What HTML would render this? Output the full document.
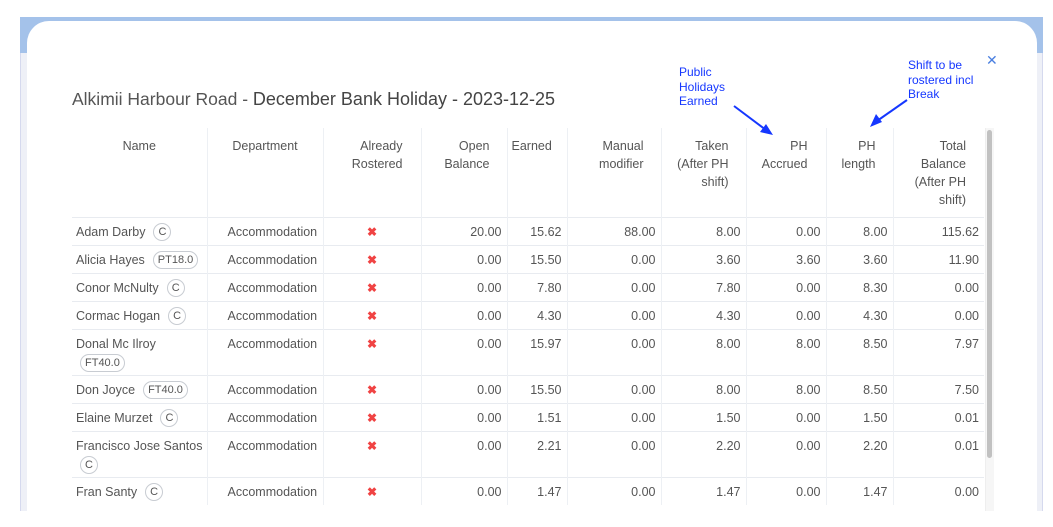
<!DOCTYPE html>
<html><head><meta charset="utf-8"><style>
*{box-sizing:border-box;margin:0;padding:0}
body{width:1053px;height:527px;background:#fff;position:relative;overflow:hidden;font-family:"Liberation Sans",sans-serif;color:#555}
.back{position:absolute;left:20px;top:17px;width:1023px;height:494px;background:#eef0f7;border-right:1px solid #d5d9ee;border-left:1px solid #d5d9ee}
.band{position:absolute;left:20px;top:17px;width:1023px;height:36px;background:#a4c2ea}
.modal{position:absolute;left:27px;top:21px;width:1010px;height:506px;background:#fff;border-radius:22px 22px 0 0}
.title{position:absolute;left:72px;top:89px;font-size:17.5px;color:#555;letter-spacing:0}
.title span{font-size:18px;color:#444}
.close{position:absolute;left:986px;top:52px;font-size:14px;color:#4a7fe0}
.note{position:absolute;font-size:12px;color:#1537ff;line-height:14.5px}
table{position:absolute;left:72px;top:128px;border-collapse:collapse;table-layout:fixed;font-size:12.5px}
td,th{border-left:1px solid #edf0f4;vertical-align:top;font-weight:normal;white-space:nowrap}
td:first-child,th:first-child{border-left:none}
th{height:89px;padding-top:9px;line-height:18px;color:#555}
td{border-top:1px solid #e8ebf0;padding-top:7px;line-height:15px}
tr.r td{height:28px}
tr.t td{height:46px}
.n{text-align:right;padding-right:5px}
.c{text-align:center}
.x{color:#f04343;text-align:center;font-size:12px;font-weight:bold}
.b{display:inline-block;border:1px solid #c8ccd2;border-radius:9px;font-size:11px;line-height:14px;min-width:18px;text-align:center;padding:1px 4px;margin-left:8px;color:#555;position:relative;top:-1px;vertical-align:baseline}
.nm{padding-left:4px;line-height:16px;padding-top:6px}
.sb{position:absolute;left:985px;top:128px;width:9px;height:383px;background:#f6f6f6;border-left:1px solid #eee}
.th{position:absolute;left:987px;top:130px;width:5px;height:328px;background:#c1c1c1;border-radius:3px}
</style></head><body>
<div class="back"></div><div class="band"></div>
<div class="modal"></div>
<div class="title">Alkimii Harbour Road - <span>December Bank Holiday - 2023-12-25</span></div>
<div class="close">✕</div>
<div class="note" style="left:679px;top:65px">Public<br>Holidays<br>Earned</div>
<div class="note" style="left:908px;top:58px">Shift to be<br>rostered incl<br>Break</div>
<svg style="position:absolute;left:0;top:0" width="1053" height="527">
<g stroke="#1537ff" stroke-width="2" fill="#1537ff">
<line x1="734" y1="106" x2="766" y2="130"/><polygon points="773,135 760,132 766,124" stroke="none"/>
<line x1="907" y1="100" x2="877" y2="121"/><polygon points="870,127 876,114 882,122" stroke="none"/>
</g></svg>
<table>
<colgroup><col style="width:135px"><col style="width:116px"><col style="width:98px"><col style="width:86px"><col style="width:60px"><col style="width:94px"><col style="width:85px"><col style="width:80px"><col style="width:67px"><col style="width:91px"></colgroup>
<tr><th class="c">Name</th><th class="c">Department</th><th style="text-align:right;padding-right:18px">Already<br>Rostered</th><th style="text-align:right;padding-right:17px">Open<br>Balance</th><th style="text-align:left;padding-left:4px">Earned</th><th style="text-align:right;padding-right:17px">Manual<br>modifier</th><th style="text-align:right;padding-right:17px">Taken<br>(After PH<br>shift)</th><th style="text-align:right;padding-right:18px">PH<br>Accrued</th><th style="text-align:right;padding-right:17px">PH<br>length</th><th style="text-align:right;padding-right:18px">Total<br>Balance<br>(After PH<br>shift)</th></tr>
<tr class="r"><td class="nm">Adam Darby<span class="b">C</span></td><td style="padding-left:20px">Accommodation</td><td class="x">✖</td><td class="n">20.00</td><td class="n">15.62</td><td class="n">88.00</td><td class="n">8.00</td><td class="n">0.00</td><td class="n">8.00</td><td class="n">115.62</td></tr>
<tr class="r"><td class="nm">Alicia Hayes<span class="b">PT18.0</span></td><td style="padding-left:20px">Accommodation</td><td class="x">✖</td><td class="n">0.00</td><td class="n">15.50</td><td class="n">0.00</td><td class="n">3.60</td><td class="n">3.60</td><td class="n">3.60</td><td class="n">11.90</td></tr>
<tr class="r"><td class="nm">Conor McNulty<span class="b">C</span></td><td style="padding-left:20px">Accommodation</td><td class="x">✖</td><td class="n">0.00</td><td class="n">7.80</td><td class="n">0.00</td><td class="n">7.80</td><td class="n">0.00</td><td class="n">8.30</td><td class="n">0.00</td></tr>
<tr class="r"><td class="nm">Cormac Hogan<span class="b">C</span></td><td style="padding-left:20px">Accommodation</td><td class="x">✖</td><td class="n">0.00</td><td class="n">4.30</td><td class="n">0.00</td><td class="n">4.30</td><td class="n">0.00</td><td class="n">4.30</td><td class="n">0.00</td></tr>
<tr class="t"><td class="nm">Donal Mc Ilroy<br><span class="b" style="margin-left:4px;top:2px">FT40.0</span></td><td style="padding-left:20px">Accommodation</td><td class="x">✖</td><td class="n">0.00</td><td class="n">15.97</td><td class="n">0.00</td><td class="n">8.00</td><td class="n">8.00</td><td class="n">8.50</td><td class="n">7.97</td></tr>
<tr class="r"><td class="nm">Don Joyce<span class="b">FT40.0</span></td><td style="padding-left:20px">Accommodation</td><td class="x">✖</td><td class="n">0.00</td><td class="n">15.50</td><td class="n">0.00</td><td class="n">8.00</td><td class="n">8.00</td><td class="n">8.50</td><td class="n">7.50</td></tr>
<tr class="r"><td class="nm">Elaine Murzet<span class="b">C</span></td><td style="padding-left:20px">Accommodation</td><td class="x">✖</td><td class="n">0.00</td><td class="n">1.51</td><td class="n">0.00</td><td class="n">1.50</td><td class="n">0.00</td><td class="n">1.50</td><td class="n">0.01</td></tr>
<tr class="t"><td class="nm">Francisco Jose Santos<br><span class="b" style="margin-left:4px;top:2px">C</span></td><td style="padding-left:20px">Accommodation</td><td class="x">✖</td><td class="n">0.00</td><td class="n">2.21</td><td class="n">0.00</td><td class="n">2.20</td><td class="n">0.00</td><td class="n">2.20</td><td class="n">0.01</td></tr>
<tr class="r"><td class="nm">Fran Santy<span class="b">C</span></td><td style="padding-left:20px">Accommodation</td><td class="x">✖</td><td class="n">0.00</td><td class="n">1.47</td><td class="n">0.00</td><td class="n">1.47</td><td class="n">0.00</td><td class="n">1.47</td><td class="n">0.00</td></tr>
</table>
<div class="sb"></div><div class="th"></div>
</body></html>
